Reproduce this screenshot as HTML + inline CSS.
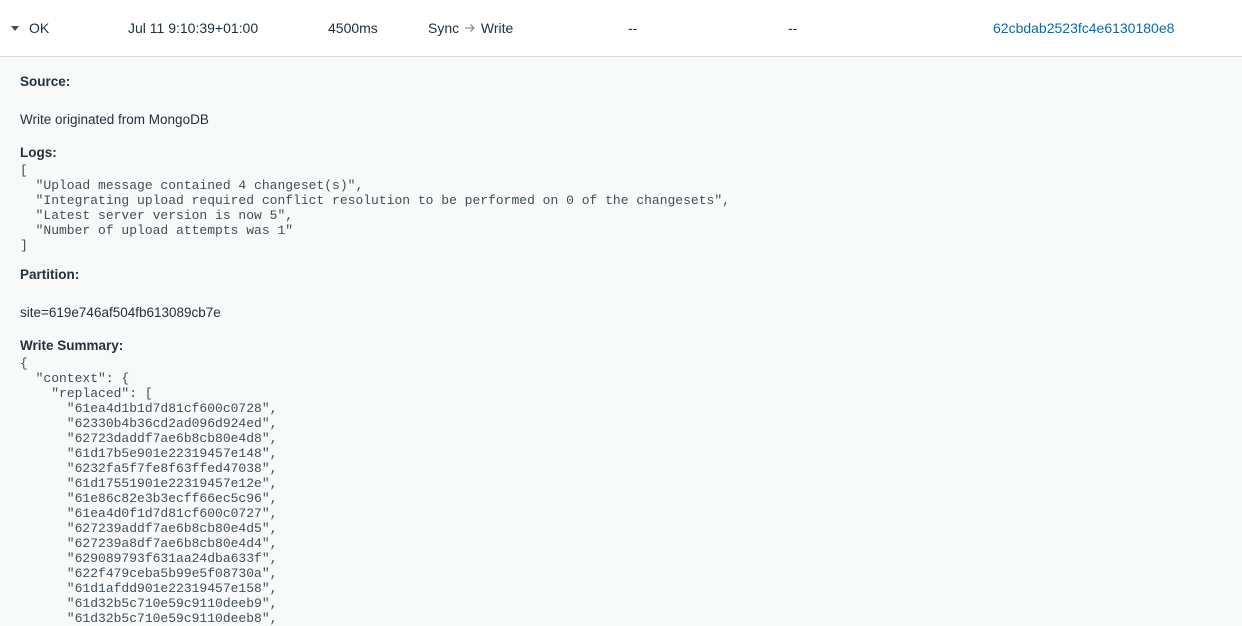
<!DOCTYPE html>
<html><head><meta charset="utf-8"><style>
body{margin:0;width:1242px;height:613px;overflow:hidden;background:#f8f9f9;font-family:"Liberation Sans",Helvetica,Arial,sans-serif;font-size:13.5px;color:#21313c;position:relative}
.hdr{position:absolute;left:0;top:0;width:1242px;height:56px;background:#fff;border-bottom:1px solid #d5d8da;font-size:14px}
.hdr span{position:absolute;top:20px;line-height:16px;color:#21313c}
.a{position:absolute;left:20px;line-height:16px}
.h{font-weight:bold}
pre{position:absolute;left:20px;margin:0;font-family:"Liberation Mono","Courier New",monospace;font-size:13px;line-height:15px;color:#3d4f58}
</style></head><body>
<div class="hdr">
<span style="left:10px"><svg width="10" height="8" style="vertical-align:middle;margin-top:-2px"><path d="M1 2h8L5 7z" fill="#3d4f58"/></svg></span>
<span style="left:29px">OK</span>
<span style="left:128px">Jul 11 9:10:39+01:00</span>
<span style="left:328px">4500ms</span>
<span style="left:428px">Sync <svg width="12" height="10" style="vertical-align:middle;margin:-2px 1px 0"><path d="M1 5h9M6.5 1.5L10 5l-3.5 3.5" stroke="#889397" stroke-width="1.3" fill="none"/></svg> Write</span>
<span style="left:628px">--</span>
<span style="left:788px">--</span>
<span style="left:993px;color:#016bb8">62cbdab2523fc4e6130180e8</span>
</div>
<div class="a h" style="top:74px">Source:</div>
<div class="a" style="top:112px">Write originated from MongoDB</div>
<div class="a h" style="top:145px">Logs:</div>
<pre style="top:163px">[
  "Upload message contained 4 changeset(s)",
  "Integrating upload required conflict resolution to be performed on 0 of the changesets",
  "Latest server version is now 5",
  "Number of upload attempts was 1"
]</pre>
<div class="a h" style="top:267px">Partition:</div>
<div class="a" style="top:305px">site=619e746af504fb613089cb7e</div>
<div class="a h" style="top:338px">Write Summary:</div>
<pre style="top:356px">{
  "context": {
    "replaced": [
      "61ea4d1b1d7d81cf600c0728",
      "62330b4b36cd2ad096d924ed",
      "62723daddf7ae6b8cb80e4d8",
      "61d17b5e901e22319457e148",
      "6232fa5f7fe8f63ffed47038",
      "61d17551901e22319457e12e",
      "61e86c82e3b3ecff66ec5c96",
      "61ea4d0f1d7d81cf600c0727",
      "627239addf7ae6b8cb80e4d5",
      "627239a8df7ae6b8cb80e4d4",
      "629089793f631aa24dba633f",
      "622f479ceba5b99e5f08730a",
      "61d1afdd901e22319457e158",
      "61d32b5c710e59c9110deeb9",
      "61d32b5c710e59c9110deeb8",</pre>
</body></html>
